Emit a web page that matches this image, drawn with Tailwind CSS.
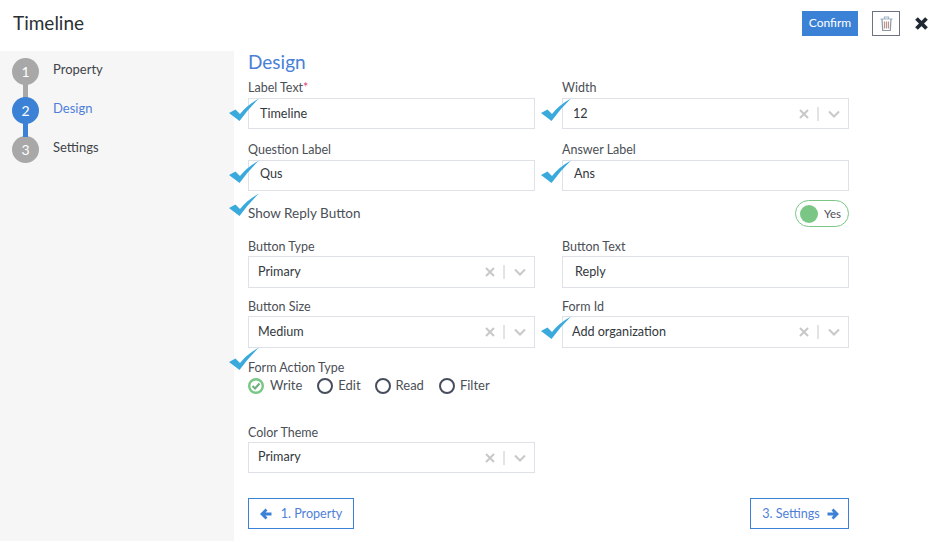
<!DOCTYPE html>
<html lang="en">
<head>
    <meta charset="UTF-8">
    <title>Timeline</title>
    <script src="https://cdn.jsdelivr.net/npm/@tailwindcss/browser@4"></script>
</head>
<body class="bg-white font-['Lato','Open_Sans',sans-serif] text-[14px] text-[#4b4f56] w-[941px] h-[541px] overflow-hidden">
    <svg class="hidden">
        <symbol id="tick" viewBox="0 0 30 23">
            <path d="M0 15 L6.5 11.5 L11 16 Q18 7 30 0.5 Q19 11 10.5 23 Z" fill="#3aa9dc"/>
        </symbol>
        <symbol id="select-icons" viewBox="0 0 46 20">
            <g fill="none" stroke="#c8c8c8">
                <path d="M2 6L10 14M10 6L2 14" stroke-width="2"/>
                <path d="M20 3V17" stroke-width="1"/>
                <path d="M31 7.5L36 12.5L41 7.5" stroke-width="2"/>
            </g>
        </symbol>
    </svg>

    <!-- header -->
    <header class="h-[51px] flex items-center pl-[13px] pr-[13px]">
        <h1 class="text-[19px] text-[#2b2f33] flex-1 pb-[5px]">Timeline</h1>
        <button class="w-[56px] h-[25px] mb-[5px] bg-[#3b82d6] text-white text-[12px]">Confirm</button>
        <button class="w-[28px] h-[25px] mb-[5px] ml-[14px] border border-[#6b7280] flex items-center justify-center">
            <svg width="13" height="15" viewBox="0 0 13 15" fill="none" stroke-width="1.2">
                <path d="M0.5 3H12.5M4.5 3V1H8.5V3" stroke="#9fb3c4"/>
                <path d="M2 3L2.7 14.5H10.3L11 3" stroke="#8f97a6"/>
                <path d="M4.5 5.5V12.5M6.5 5.5V12.5M8.5 5.5V12.5" stroke="#b8938a"/>
            </svg>
        </button>
        <svg class="ml-[15px] mb-[5px]" width="13" height="13" viewBox="0 0 13 13">
            <path d="M1.5 1.5L11.5 11.5M11.5 1.5L1.5 11.5" stroke="#1f2933" stroke-width="3.8"/>
        </svg>
    </header>

    <div class="flex h-[490px]">
        <!-- stepper -->
        <aside class="w-[234px] bg-[#f6f6f6] pt-[7px] pl-[12px]">
            <div class="flex h-[39px] relative">
                <span class="absolute left-[11px] top-[26px] w-[5px] h-[14px] bg-[#a8a8a8]"></span>
                <span class="relative w-[27px] h-[27px] rounded-full bg-[#a8a8a8] text-white flex items-center justify-center">1</span>
                <span class="ml-[14px] text-[#3f4449] text-[13px] leading-[23px]">Property</span>
            </div>
            <div class="flex h-[39px] relative">
                <span class="absolute left-[11px] top-[26px] w-[5px] h-[14px] bg-[#3b82d6]"></span>
                <span class="relative w-[27px] h-[27px] rounded-full bg-[#3b82d6] text-white flex items-center justify-center">2</span>
                <span class="ml-[14px] text-[#4f7fd9] text-[13px] leading-[23px]">Design</span>
            </div>
            <div class="flex h-[39px]">
                <span class="w-[27px] h-[27px] rounded-full bg-[#a8a8a8] text-white flex items-center justify-center">3</span>
                <span class="ml-[14px] text-[#3f4449] text-[13px] leading-[23px]">Settings</span>
            </div>
        </aside>

        <!-- form -->
        <main class="pl-[14px] w-[615px]">
            <h2 class="text-[19px] leading-[22px] text-[#4a80d8]">Design</h2>

            <div class="grid grid-cols-2 gap-x-[27px] mt-[4px]">
                <div class="relative h-[62px]">
                    <svg class="absolute left-[-19px] top-[21px] w-[30px] h-[23px] z-10"><use href="#tick"/></svg>
                    <label class="block h-[21px] pt-px leading-[20px] text-[12.5px]">Label Text<span class="text-[#e0457b]">*</span></label>
                    <div class="h-[31px] border border-[#dfe1e8] pl-[11px] pt-px flex items-center text-[12.6px] text-[#33383d]">Timeline</div>
                </div>
                <div class="relative h-[62px]">
                    <svg class="absolute left-[-21px] top-[21px] w-[30px] h-[23px] z-10"><use href="#tick"/></svg>
                    <label class="block h-[21px] pt-px leading-[20px] text-[12.5px]">Width</label>
                    <div class="h-[31px] border border-[#dfe1e8] pl-[10px] pt-px flex items-center text-[12.6px] text-[#33383d]">
                        <span class="flex-1">12</span>
                        <svg width="46" height="20" class="mr-[4px]"><use href="#select-icons"/></svg>
                    </div>
                </div>

                <div class="relative h-[61px]">
                    <svg class="absolute left-[-19px] top-[21px] w-[30px] h-[23px] z-10"><use href="#tick"/></svg>
                    <label class="block h-[21px] leading-[21px] text-[12.5px]">Question Label</label>
                    <div class="h-[31px] border border-[#dfe1e8] pl-[11px] pb-[3px] flex items-center text-[12.6px] text-[#33383d]">Qus</div>
                </div>
                <div class="relative h-[61px]">
                    <svg class="absolute left-[-21px] top-[21px] w-[30px] h-[23px] z-10"><use href="#tick"/></svg>
                    <label class="block h-[21px] leading-[21px] text-[12.5px]">Answer Label</label>
                    <div class="h-[31px] border border-[#dfe1e8] pl-[11px] pb-[3px] flex items-center text-[12.6px] text-[#33383d]">Ans</div>
                </div>
            </div>

            <div class="relative flex items-center justify-between h-[27px] w-[601px]">
                <svg class="absolute left-[-19px] top-[-7px] w-[30px] h-[23px] z-10"><use href="#tick"/></svg>
                <span class="text-[13.5px]">Show Reply Button</span>
                <span class="w-[54px] h-[27px] rounded-full border border-[#7ac785] flex items-center pl-[4px]">
                    <span class="w-[18px] h-[18px] rounded-full bg-[#7ac785]"></span>
                    <span class="ml-[6px] text-[11.5px]">Yes</span>
                </span>
            </div>

            <div class="grid grid-cols-2 gap-x-[27px] mt-[10px]">
                <div class="h-[59px]">
                    <label class="block h-[19px] leading-[19px] text-[12.5px]">Button Type</label>
                    <div class="h-[32px] border border-[#dfe1e8] pl-[9px] flex items-center text-[12.6px] text-[#33383d]">
                        <span class="flex-1">Primary</span>
                        <svg width="46" height="20" class="mr-[4px]"><use href="#select-icons"/></svg>
                    </div>
                </div>
                <div class="h-[59px]">
                    <label class="block h-[19px] leading-[19px] text-[12.5px]">Button Text</label>
                    <div class="h-[32px] border border-[#dfe1e8] pl-[12px] flex items-center text-[12.6px] text-[#33383d]">Reply</div>
                </div>

                <div class="h-[52px]">
                    <label class="block h-[20px] pt-px leading-[19px] text-[12.5px]">Button Size</label>
                    <div class="h-[32px] border border-[#dfe1e8] pl-[9px] flex items-center text-[12.6px] text-[#33383d]">
                        <span class="flex-1">Medium</span>
                        <svg width="46" height="20" class="mr-[4px]"><use href="#select-icons"/></svg>
                    </div>
                </div>
                <div class="relative h-[52px]">
                    <svg class="absolute left-[-21px] top-[20px] w-[30px] h-[23px] z-10"><use href="#tick"/></svg>
                    <label class="block h-[20px] pt-px leading-[19px] text-[12.5px]">Form Id</label>
                    <div class="h-[32px] border border-[#dfe1e8] pl-[9px] flex items-center text-[12.6px] text-[#33383d]">
                        <span class="flex-1">Add organization</span>
                        <svg width="46" height="20" class="mr-[4px]"><use href="#select-icons"/></svg>
                    </div>
                </div>
            </div>

            <div class="relative mt-[10px]">
                <svg class="absolute left-[-19px] top-[-11px] w-[30px] h-[23px] z-10"><use href="#tick"/></svg>
                <label class="block h-[18px] leading-[19px] text-[12.5px]">Form Action Type</label>
                <div class="flex items-center h-[19px] text-[13px]">
                    <svg width="16" height="16" viewBox="0 0 16 16" fill="none">
                        <circle cx="8" cy="8" r="6.8" stroke="#7ac785" stroke-width="2.4"/>
                        <path d="M4.5 8L7 10.5L11.5 5.5" stroke="#6fae7a" stroke-width="2"/>
                    </svg>
                    <span class="ml-[6px]">Write</span>
                    <span class="ml-[15px] w-[16px] h-[16px] rounded-full border-[2.5px] border-[#474d5c]"></span>
                    <span class="ml-[5px]">Edit</span>
                    <span class="ml-[14px] w-[16px] h-[16px] rounded-full border-[2.5px] border-[#474d5c]"></span>
                    <span class="ml-[5px]">Read</span>
                    <span class="ml-[15px] w-[16px] h-[16px] rounded-full border-[2.5px] border-[#474d5c]"></span>
                    <span class="ml-[5px]">Filter</span>
                </div>
            </div>

            <div class="w-[287px] mt-[27px]">
                <label class="block h-[20px] pt-px leading-[19px] text-[12.5px]">Color Theme</label>
                <div class="h-[31px] border border-[#dfe1e8] pl-[9px] pb-px flex items-center text-[12.6px] text-[#33383d]">
                    <span class="flex-1">Primary</span>
                    <svg width="46" height="20" class="mr-[4px] mt-[1px]"><use href="#select-icons"/></svg>
                </div>
            </div>

            <div class="flex justify-between w-[601px] mt-[25px]">
                <button class="w-[106px] h-[31px] border border-[#3b82d6] pt-px text-[#4f7fd9] text-[12.6px] flex items-center justify-center">
                    <svg width="12" height="12" viewBox="0 0 12 12" fill="none" stroke="#3b82d6" stroke-width="2.8">
                        <path d="M6.5 1.5L2 6L6.5 10.5M2 6H11.5"/>
                    </svg>
                    <span class="ml-[9px]">1. Property</span>
                </button>
                <button class="w-[99px] h-[31px] border border-[#3b82d6] pt-px text-[#4f7fd9] text-[12.6px] flex items-center justify-center">
                    <span class="mr-[7px] ml-[2px]">3. Settings</span>
                    <svg width="12" height="12" viewBox="0 0 12 12" fill="none" stroke="#3b82d6" stroke-width="2.8">
                        <path d="M5.5 1.5L10 6L5.5 10.5M10 6H0.5"/>
                    </svg>
                </button>
            </div>
        </main>
    </div>
</body>
</html>
